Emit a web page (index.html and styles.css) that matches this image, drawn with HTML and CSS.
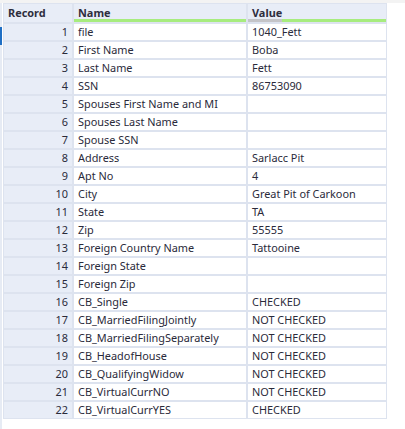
FILE: index.html
```html
<!DOCTYPE html>
<html>
<head>
<meta charset="utf-8">
<link rel="stylesheet" href="styles.css">
</head>
<body>
<div class="topstrip"></div>
<div class="main">
  <div class="leftstrip"><div class="selmark"></div></div>
  <div class="grid">
    <div class="h rec">Record</div>
    <div class="h name">Name</div>
    <div class="h val"><span class="sortbar"></span>Value</div>

    <div class="c rec">1</div><div class="c">file</div><div class="c">1040_Fett</div>
    <div class="c rec">2</div><div class="c">First Name</div><div class="c">Boba</div>
    <div class="c rec">3</div><div class="c">Last Name</div><div class="c">Fett</div>
    <div class="c rec">4</div><div class="c">SSN</div><div class="c">86753090</div>
    <div class="c rec">5</div><div class="c">Spouses First Name and MI</div><div class="c"></div>
    <div class="c rec">6</div><div class="c">Spouses Last Name</div><div class="c"></div>
    <div class="c rec">7</div><div class="c">Spouse SSN</div><div class="c"></div>
    <div class="c rec">8</div><div class="c">Address</div><div class="c">Sarlacc Pit</div>
    <div class="c rec">9</div><div class="c">Apt No</div><div class="c">4</div>
    <div class="c rec">10</div><div class="c">City</div><div class="c">Great Pit of Carkoon</div>
    <div class="c rec">11</div><div class="c">State</div><div class="c">TA</div>
    <div class="c rec">12</div><div class="c">Zip</div><div class="c">55555</div>
    <div class="c rec">13</div><div class="c">Foreign Country Name</div><div class="c">Tattooine</div>
    <div class="c rec">14</div><div class="c">Foreign State</div><div class="c"></div>
    <div class="c rec">15</div><div class="c">Foreign Zip</div><div class="c"></div>
    <div class="c rec">16</div><div class="c">CB_Single</div><div class="c">CHECKED</div>
    <div class="c rec">17</div><div class="c">CB_MarriedFilingJointly</div><div class="c">NOT CHECKED</div>
    <div class="c rec">18</div><div class="c">CB_MarriedFilingSeparately</div><div class="c">NOT CHECKED</div>
    <div class="c rec">19</div><div class="c">CB_HeadofHouse</div><div class="c">NOT CHECKED</div>
    <div class="c rec">20</div><div class="c">CB_QualifyingWidow</div><div class="c">NOT CHECKED</div>
    <div class="c rec">21</div><div class="c">CB_VirtualCurrNO</div><div class="c">NOT CHECKED</div>
    <div class="c rec">22</div><div class="c">CB_VirtualCurrYES</div><div class="c">CHECKED</div>
  </div>
</div>
</body>
</html>
```
FILE: styles.css
```css
html, body {
  margin: 0;
  padding: 0;
  background: #ffffff;
  font-family: "Noto Sans", "Open Sans", sans-serif;
  font-size: 10.9px;
  color: #2a2a3a;
}
.topstrip {
  height: 3px;
  background: #f3f3f3;
}
.main {
  display: flex;
  height: 426px;
}
.leftstrip {
  width: 2px;
  background: #e6ebf4;
  position: relative;
}
.selmark {
  position: absolute;
  left: 0;
  top: 24px;
  width: 2px;
  height: 18px;
  background: #1f6fc4;
}
.grid {
  margin-left: 1px;
  align-self: flex-start;
  display: grid;
  grid-template-columns: 68px 172px 138px;
  grid-auto-rows: 16px;
  grid-template-rows: 18px;
  gap: 2px;
  background: #dde3ef;
  border: 1px solid #dde3ef;
}
.h {
  background: #e8edf7;
  font-weight: bold;
  color: #2e2e3e;
  line-height: 17px;
  padding-left: 4px;
  position: relative;
}
.h.name, .h.val {
  box-shadow: inset 0 -3px 0 #a7ec7e;
}
.sortbar {
  position: absolute;
  left: 0;
  bottom: 0;
  width: 34px;
  height: 3px;
  background: #c4c4c8;
}
.c {
  background: #ffffff;
  line-height: 16px;
  padding-left: 4px;
  white-space: nowrap;
  overflow: hidden;
}
.c.rec {
  background: #e8edf7;
  text-align: right;
  padding-right: 4px;
  padding-left: 0;
}
```
